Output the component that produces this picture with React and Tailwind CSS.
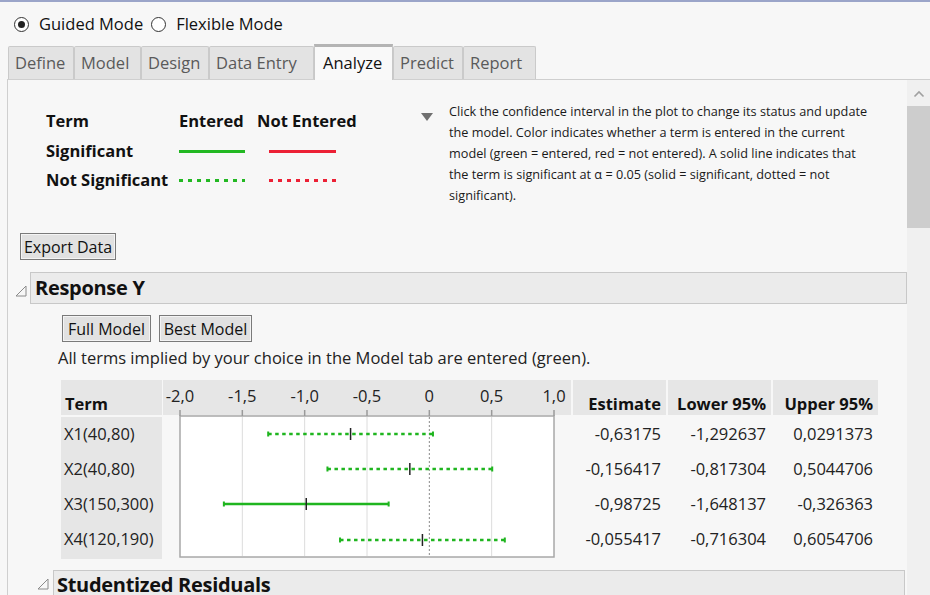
import React from 'react';

const ticks = [
  { v: -2.0, label: '-2,0' },
  { v: -1.5, label: '-1,5' },
  { v: -1.0, label: '-1,0' },
  { v: -0.5, label: '-0,5' },
  { v: 0, label: '0' },
  { v: 0.5, label: '0,5' },
  { v: 1.0, label: '1,0' },
];

const rows = [
  { term: 'X1(40,80)', est: -0.63175, lo: -1.292637, hi: 0.0291373, sig: false, e: '-0,63175', l: '-1,292637', u: '0,0291373' },
  { term: 'X2(40,80)', est: -0.156417, lo: -0.817304, hi: 0.5044706, sig: false, e: '-0,156417', l: '-0,817304', u: '0,5044706' },
  { term: 'X3(150,300)', est: -0.98725, lo: -1.648137, hi: -0.326363, sig: true, e: '-0,98725', l: '-1,648137', u: '-0,326363' },
  { term: 'X4(120,190)', est: -0.055417, lo: -0.716304, hi: 0.6054706, sig: false, e: '-0,055417', l: '-0,716304', u: '0,6054706' },
];

const rowY = [54, 89, 124, 160];
const px = (v) => 17 + (v + 2) * (374 / 3);

const Radio = ({ checked, className = '' }) => (
  <span className={`w-[15px] h-[15px] shrink-0 rounded-full border border-[#333] bg-white flex items-center justify-center ${className}`}>
    {checked && <span className="w-[7px] h-[7px] rounded-full bg-[#222]" />}
  </span>
);

const Disclosure = () => (
  <svg width="12" height="12" viewBox="0 0 12 12">
    <path d="M1 11 L11 11 L11 1 Z" fill="none" stroke="#8a8a8a" strokeWidth="1" />
  </svg>
);

const Btn = ({ children, className = '' }) => (
  <button className={`h-[27px] px-0 whitespace-nowrap bg-[#e1e1e1] border border-[#7a7a7a] shadow-[inset_0_0_0_1px_#f4f4f4] text-[16px] leading-none text-[#111] ${className}`}>
    {children}
  </button>
);

const tabs = [
  { name: 'Define', w: 'w-[66px]' },
  { name: 'Model', w: 'w-[67px]' },
  { name: 'Design', w: 'w-[68px]' },
  { name: 'Data Entry', w: 'w-[105px]' },
  { name: 'Analyze', w: 'w-[79px]', active: true },
  { name: 'Predict', w: 'w-[70px]' },
  { name: 'Report', w: 'w-[73px]' },
];

const Plot = () => (
  <svg width="408" height="180" viewBox="0 0 408 180" className="shrink-0">
    <rect x="0" y="0" width="408" height="35" fill="#e6e6e6" />
    {ticks.map((t) => (
      <text key={t.label} x={px(t.v)} y="22" textAnchor="middle" fontSize="16.5" fill="#222" fontFamily="'Open Sans', sans-serif">
        {t.label}
      </text>
    ))}
    <rect x="17" y="36" width="374" height="141" fill="#ffffff" stroke="#a8a8a8" strokeWidth="1.5" />
    {ticks.map((t) => (
      <line key={'tk' + t.label} x1={px(t.v)} x2={px(t.v)} y1="30" y2="36" stroke="#9a9a9a" strokeWidth="1.5" />
    ))}
    {ticks.slice(1, 6).map((t) =>
      t.v === 0 ? (
        <line key={'g' + t.label} x1={px(0)} x2={px(0)} y1="37" y2="176" stroke="#8a8a8a" strokeWidth="1" strokeDasharray="2 2" />
      ) : (
        <line key={'g' + t.label} x1={px(t.v)} x2={px(t.v)} y1="37" y2="176" stroke="#dcdcdc" strokeWidth="1" />
      )
    )}
    {rows.map((r, i) => {
      const y = rowY[i];
      const a = px(r.lo);
      const b = px(r.hi);
      const m = px(r.est);
      return (
        <g key={r.term}>
          <line x1={a} x2={b} y1={y} y2={y} stroke="#1fb51f" strokeWidth="2.5" strokeDasharray={r.sig ? undefined : '3.5 3.5'} />
          <line x1={a} x2={a} y1={y - 2.5} y2={y + 2.5} stroke="#1fb51f" strokeWidth="2" />
          <line x1={b} x2={b} y1={y - 2.5} y2={y + 2.5} stroke="#1fb51f" strokeWidth="2" />
          <line x1={m} x2={m} y1={y - 6} y2={y + 6} stroke="#222" strokeWidth="1.5" />
        </g>
      );
    })}
  </svg>
);

const NumCol = ({ head, w, field }) => (
  <div className={`flex flex-col shrink-0 ${w}`}>
    <div className="h-[35px] bg-[#e6e6e6] flex items-end justify-end pr-[5px] pb-0 leading-[22px] font-bold text-[16.5px] text-[#111]">{head}</div>
    <div className="pt-[2px]">
      {rows.map((r) => (
        <div key={r.term} className="h-[35px] flex items-center justify-end pr-[5px] text-[16.5px] text-[#222]">
          {r[field]}
        </div>
      ))}
    </div>
  </div>
);

export default function App() {
  return (
    <div className="w-[930px] h-[595px] overflow-hidden bg-[#f7f7f7] border-t-2 border-[#9ba5c9] font-['Open_Sans','Noto_Sans',sans-serif] text-[#111] flex flex-col">
      {/* mode radios */}
      <div className="h-[42px] shrink-0 flex items-center pl-[14px] pt-[2px] text-[16.5px]">
        <Radio checked />
        <span className="ml-[10px]">Guided Mode</span>
        <Radio className="ml-[8px]" />
        <span className="ml-[10px]">Flexible Mode</span>
      </div>

      {/* tabs */}
      <div className="flex shrink-0 items-end pl-[8px] h-[35px] relative z-10">
        {tabs.map((t) =>
          t.active ? (
            <div key={t.name} className={`${t.w} h-[36px] bg-[#f9f9f9] border-t-[3px] border-t-[#b4b4b4] border-x border-x-[#c8c8c8] -mb-[1px] flex items-center pl-[8px] text-[16.5px] text-[#111]`}>
              {t.name}
            </div>
          ) : (
            <div key={t.name} className={`${t.w} h-[33px] bg-[#e3e3e3] border border-[#cacaca] border-b-0 rounded-t-[2px] flex items-center pl-[6px] text-[16.5px] text-[#5a5a5a]`}>
              {t.name}
            </div>
          )
        )}
      </div>

      {/* panel */}
      <div className="flex flex-1 min-h-0 ml-[7px]">
        <div className="flex-1 min-w-0 overflow-hidden border-l border-t border-[#cfcfcf] bg-[#f7f7f7]">
          {/* legend + description */}
          <div className="flex pt-[27px] h-[147px]">
            <div className="ml-[38px] grid grid-cols-[133px_78px_104px] auto-rows-[29.5px] items-center font-bold text-[16.5px] text-[#111]">
              <span>Term</span>
              <span>Entered</span>
              <span>Not Entered</span>
              <span>Significant</span>
              <span className="block w-[66px] h-[3px] bg-[#22b822]" />
              <span className="block w-[67px] h-[3px] bg-[#ec2035] ml-[12px]" />
              <span className="whitespace-nowrap">Not Significant</span>
              <span className="block w-[66px] h-[3px] bg-[repeating-linear-gradient(90deg,#22b822_0_4px,transparent_4px_9px)]" />
              <span className="block w-[67px] h-[3px] bg-[repeating-linear-gradient(90deg,#ec2035_0_4px,transparent_4px_9px)] ml-[12px]" />
            </div>
            <div className="ml-[59px] mt-[1px] flex items-start gap-[15px]">
              <svg width="14" height="10" viewBox="0 0 14 10" className="mt-[4px] shrink-0">
                <path d="M1 1 L13 1 L7 9 Z" fill="#707070" />
              </svg>
              <div className="text-[12.7px] leading-[21px] text-[#1a1a1a] -mt-[7px] whitespace-nowrap">
                Click the confidence interval in the plot to change its status and update<br />
                the model. Color indicates whether a term is entered in the current<br />
                model (green = entered, red = not entered). A solid line indicates that<br />
                the term is significant at α = 0.05 (solid = significant, dotted = not<br />
                significant).
              </div>
            </div>
          </div>

          {/* export */}
          <div className="pl-[12px] mt-[6px]">
            <Btn className="w-[96px]">Export Data</Btn>
          </div>

          {/* Response Y outline */}
          <div className="flex items-center mt-[12px] pl-[7px]">
            <span className="w-[15px] flex justify-start pt-[6px]"><Disclosure /></span>
            <div className="w-[877px] h-[32px] bg-[#ebebeb] border border-[#c8c8c8] flex items-center pl-[4px] font-bold text-[20px] tracking-[-0.3px] text-[#111]">
              Response Y
            </div>
          </div>

          <div className="pl-[54px] mt-[11px] flex gap-[8px]">
            <Btn className="w-[89px]">Full Model</Btn>
            <Btn className="w-[93px]">Best Model</Btn>
          </div>
          <div className="pl-[50px] mt-[4px] text-[16.5px] text-[#222] leading-[24px] whitespace-nowrap">
            All terms implied by your choice in the Model tab are entered (green).
          </div>

          {/* estimates table */}
          <div className="pl-[53px] mt-[10px] flex gap-[1px]">
            <div className="flex flex-col w-[101px] shrink-0">
              <div className="h-[35px] bg-[#e6e6e6] flex items-end pl-[4px] pb-0 leading-[22px] font-bold text-[16.5px]">Term</div>
              <div className="mt-[2px] bg-[#e6e6e6] h-[142px]">
                {rows.map((r) => (
                  <div key={r.term} className="h-[35px] flex items-center pl-[3px] text-[16.5px] text-[#222] whitespace-nowrap">{r.term}</div>
                ))}
              </div>
            </div>
            <Plot />
            <div className="flex gap-[2px] ml-[1px]">
              <NumCol head="Estimate" w="w-[93px]" field="e" />
              <NumCol head="Lower 95%" w="w-[103px]" field="l" />
              <NumCol head="Upper 95%" w="w-[105px]" field="u" />
            </div>
          </div>

          {/* Studentized Residuals */}
          <div className="flex items-start mt-[10px] pl-[29px]">
            <span className="w-[16px] flex pt-[8px]"><Disclosure /></span>
            <div className="w-[852px] h-[32px] bg-[#ebebeb] border border-[#c8c8c8] flex items-start pt-[1px] pl-[3px] font-bold text-[20px] leading-[26px] tracking-[-0.3px] text-[#111] whitespace-nowrap">
              Studentized Residuals
            </div>
          </div>
        </div>

        {/* scrollbar */}
        <div className="w-[23px] shrink-0 bg-[#f0f0f0] flex flex-col items-center pt-[4px] border-t border-[#cfcfcf]">
          <svg width="12" height="8" viewBox="0 0 12 8" className="mt-[6px]">
            <path d="M1.5 6.5 L6 2 L10.5 6.5" fill="none" stroke="#a0a0a0" strokeWidth="1.6" />
          </svg>
          <div className="mt-[8px] w-full h-[122px] bg-[#cdcdcd]" />
        </div>
      </div>
    </div>
  );
}
